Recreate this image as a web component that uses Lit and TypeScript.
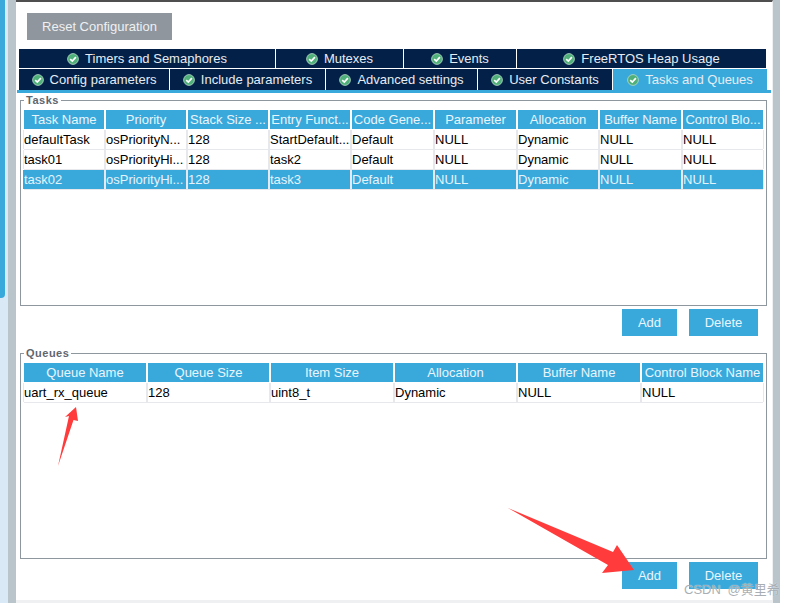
import { LitElement, html, css, svg } from "lit";
import { customElement } from "lit/decorators.js";

const check = html`<svg class="ck" viewBox="0 0 12 12" width="12" height="12" aria-hidden="true">
  <circle cx="6" cy="6" r="5.4" fill="#4fb07a" stroke="#b9dcc8" stroke-width="0.8"/>
  <path d="M3.2 6.1 L5.3 8.1 L8.9 4.2" fill="none" stroke="#fff" stroke-width="1.7"/>
</svg>`;

const row1 = [
  ["Timers and Semaphores", 256],
  ["Mutexes", 127],
  ["Events", 112],
  ["FreeRTOS Heap Usage", 249],
] as const;
const row2 = [
  ["Config parameters", 150, false],
  ["Include parameters", 155, false],
  ["Advanced settings", 151, false],
  ["User Constants", 134, false],
  ["Tasks and Queues", 154, true],
] as const;

const taskWidths = "80px 80px 80px 80px 81px 81px 80px 81px 80px";
const taskCols = ["Task Name", "Priority", "Stack Size ...", "Entry Funct...", "Code Gene...", "Parameter", "Allocation", "Buffer Name", "Control Blo..."];
const taskRows = [
  ["defaultTask", "osPriorityN...", "128", "StartDefault...", "Default", "NULL", "Dynamic", "NULL", "NULL"],
  ["task01", "osPriorityHi...", "128", "task2", "Default", "NULL", "Dynamic", "NULL", "NULL"],
  ["task02", "osPriorityHi...", "128", "task3", "Default", "NULL", "Dynamic", "NULL", "NULL"],
];
const queueWidths = "122px 121px 122px 121px 122px 121px";
const queueCols = ["Queue Name", "Queue Size", "Item Size", "Allocation", "Buffer Name", "Control Block Name"];
const queueRows = [["uart_rx_queue", "128", "uint8_t", "Dynamic", "NULL", "NULL"]];

@customElement("app-root")
export class AppRoot extends LitElement {
  static styles = css`
    :host {
      display: block;
      position: relative;
      width: 787px;
      height: 603px;
      overflow: hidden;
      background: #fff;
      font-family: "Liberation Sans", Arial, sans-serif;
      font-size: 13px;
    }
    .shell { display: flex; height: 603px; }
    .rail { width: 8px; background: #d9e9f5; flex: none; }
    .rail-fill { width: 5px; height: 298px; background: #39a9dc; border-bottom-right-radius: 4px; }
    .gutter { width: 8px; background: #b9c4cb; flex: none; }
    .edge { width: 7px; background: #b9c4cb; flex: none; }
    .tail { width: 7px; background: #fff; flex: none; }
    .main {
      width: 757px;
      flex: none;
      height: 603px;
      box-sizing: border-box;
      border-top: 2px solid #4f4f4f;
      border-bottom: 3px solid #eef0f2;
      border-right: 1px solid #eef0f2;
      display: flex;
      flex-direction: column;
      background: #fff;
    }
    .reset {
      margin: 11px 0 0 11px;
      width: 145px;
      height: 27px;
      background: #8f969d;
      color: #eef0f2;
      display: flex;
      align-items: center;
      justify-content: center;
      flex: none;
    }
    .tabs { margin: 9px 0 0 3px; width: 747px; flex: none; display: flex; flex-direction: column; gap: 1px; }
    .tabrow { display: flex; gap: 1px; }
    .tabrow.one { height: 19px; }
    .tabrow.two { height: 21px; }
    .tab {
      background: #032148;
      color: #e6ecf2;
      display: flex;
      align-items: center;
      justify-content: center;
      gap: 6px;
      flex: none;
      white-space: nowrap;
    }
    .tab.active { background: #39a9dc; }
    .ck { flex: none; }
    .strip { height: 3px; margin-left: 1px; width: 754px; background: #39a9dc; flex: none; }
    .panels { margin-left: 4px; width: 747px; flex: none; }
    fieldset {
      margin: 0;
      padding: 3px 3px 0 3px;
      width: 747px;
      height: 213px;
      box-sizing: border-box;
      border: 1px solid #8f979e;
      min-inline-size: 0;
    }
    legend {
      margin-left: 0;
      padding: 0 2px;
      height: 14px;
      line-height: 14px;
      font-size: 11px;
      font-weight: bold;
      color: #5f6670;
      letter-spacing: 0.5px;
    }
    .table { width: 739px; }
    .grid { display: grid; column-gap: 2px; }
    .head { height: 19px; margin-bottom: 1px; }
    .hc {
      background: #39a9dc;
      color: #e9f5fb;
      display: flex;
      align-items: center;
      justify-content: center;
      white-space: nowrap;
      overflow: hidden;
    }
    .row { height: 19px; margin-bottom: 1px; background: #e6e8eb; box-shadow: 0 1px 0 #e6e8eb, -1px 0 0 #e6e8eb, 1px 0 0 #e6e8eb; }
    .dc {
      background: #fff;
      color: #000;
      line-height: 19px;
      white-space: nowrap;
      overflow: hidden;
    }
    .row.sel { box-shadow: 0 1px 0 #e6e8eb, -1px 0 0 #39a9dc, 1px 0 0 #e6e8eb; }
    .row.sel .dc { background: #39a9dc; color: #e6f3fa; }
    .actions { display: flex; justify-content: flex-end; gap: 12px; padding: 3px 9px 0 0; height: 27px; }
    .btn {
      background: #39a9dc;
      color: #e9f5fb;
      height: 27px;
      display: flex;
      align-items: center;
      justify-content: center;
    }
    .btn.add { width: 55px; }
    .btn.del { width: 69px; }
    .gap { height: 10px; }
    .arrows { position: absolute; left: 0; top: 0; pointer-events: none; }
    .mark {
      position: absolute;
      left: 684px;
      top: 581px;
      color: rgba(140, 148, 155, 0.75);
      font-size: 13px;
      line-height: 17px;
      word-spacing: 3px;
      white-space: nowrap;
      font-family: "Liberation Sans", "Noto Sans CJK SC", sans-serif;
      text-shadow: 0 0 1px #fff;
    }
  `;

  private table(widths: string, cols: string[], rows: string[][], selected: number) {
    return html`<div class="table">
      <div class="grid head" style="grid-template-columns:${widths}">
        ${cols.map((c) => html`<div class="hc">${c}</div>`)}
      </div>
      ${rows.map(
        (r, i) => html`<div class="grid row ${i === selected ? "sel" : ""}" style="grid-template-columns:${widths}">
          ${r.map((c) => html`<div class="dc">${c}</div>`)}
        </div>`
      )}
    </div>`;
  }

  private actions() {
    return html`<div class="actions"><div class="btn add">Add</div><div class="btn del">Delete</div></div>`;
  }

  render() {
    return html`
      <div class="shell">
        <div class="rail"><div class="rail-fill"></div></div>
        <div class="gutter"></div>
        <div class="main">
          <div class="reset">Reset Configuration</div>
          <div class="tabs">
            <div class="tabrow one">
              ${row1.map(([t, w]) => html`<div class="tab" style="width:${w}px">${check}<span>${t}</span></div>`)}
            </div>
            <div class="tabrow two">
              ${row2.map(([t, w, a]) => html`<div class="tab ${a ? "active" : ""}" style="width:${w}px">${check}<span>${t}</span></div>`)}
            </div>
          </div>
          <div class="strip"></div>
          <div class="panels">
            <fieldset>
              <legend>Tasks</legend>
              ${this.table(taskWidths, taskCols, taskRows, 2)}
            </fieldset>
            ${this.actions()}
            <div class="gap"></div>
            <fieldset>
              <legend>Queues</legend>
              ${this.table(queueWidths, queueCols, queueRows, -1)}
            </fieldset>
            ${this.actions()}
          </div>
        </div>
        <div class="edge"></div>
        <div class="tail"></div>
      </div>
      <svg class="arrows" width="787" height="603" viewBox="0 0 787 603" aria-hidden="true">
        ${svg`<polygon fill="#ff3b3b" points="76,407 78,421 73.500,420 58,466 69,416 65,417"/>
        <polygon fill="#ff3b3b" points="508,508 613,552 617,545 634,570 602,573 608,565"/>`}
      </svg>
      <div class="mark">CSDN @黄里希</div>
    `;
  }
}
